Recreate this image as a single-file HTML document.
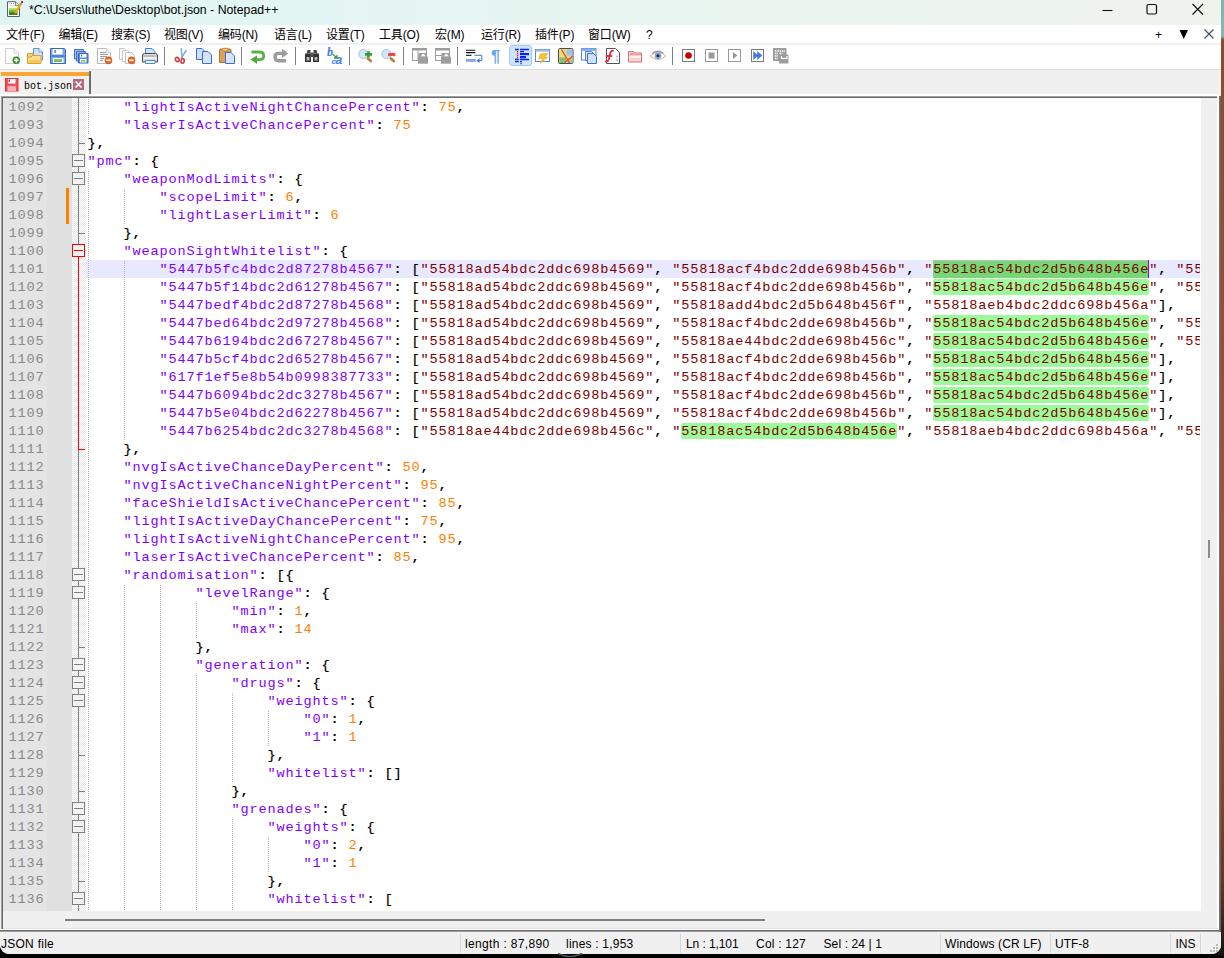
<!DOCTYPE html>
<html lang="zh"><head><meta charset="utf-8"><title>bot.json - Notepad++</title>
<style>
*{box-sizing:border-box;margin:0;padding:0}
html,body{width:1224px;height:958px;overflow:hidden}
body{position:relative;background:#000;font-family:"Liberation Sans","Noto Sans CJK SC",sans-serif;font-size:12px;color:#000}
.abs{position:absolute}
#desk{left:1218px;top:0;width:6px;height:956px;background:linear-gradient(180deg,#7fb2b4 0,#86b5b6 36px,#8e4a2c 40px,#9a4b28 300px,#a45632 560px,#8c4022 800px,#6a3520 880px,#3a241a 925px,#15100c 956px)}
#win{left:0;top:0;width:1221px;height:954px;background:#f0f0f0;border-radius:0 0 9px 9px;overflow:hidden}
#title{left:0;top:0;width:1221px;height:25px;background:linear-gradient(90deg,#e0f5f3 0,#e4f6f3 25%,#e9f5f0 55%,#edf4ee 80%,#eef3ec 100%)}
#title .t{left:29px;top:2px;height:16px;line-height:16px;font-size:12.3px;white-space:nowrap;letter-spacing:0px}
#menu{left:0;top:25px;width:1221px;height:18px;background:#fff}
#menu span{position:absolute;top:1px;letter-spacing:-.15px;height:18px;line-height:18px;font-size:12px;white-space:nowrap}
#mline{left:0;top:43px;width:1220px;height:2px;background:#f0f0f0}
#tool{left:0;top:45px;width:1221px;height:25px;background:#fff;border-bottom:1px solid #dfdfdf}
#tool .sep{position:absolute;top:2px;width:1px;height:18px;background:#808080}
#tool svg{position:absolute;top:3px;width:16px;height:16px;overflow:visible}
#tabbar{left:0;top:70px;width:1221px;height:24px;background:#f0f0f0}
#tab{left:1px;top:1px;width:90px;height:24px;background:#f0f0f0;border-right:2px solid #6d6d6d}
#tab .bar{left:0;top:1px;width:88px;height:4px;background:#faa634}
#tab .nm{left:23px;top:10px;font-family:"Liberation Mono",monospace;font-size:10px;letter-spacing:0px;line-height:12px;color:#000;white-space:nowrap}
/* editor frame */
#edtop1{left:0;top:94px;width:1219px;height:2px;background:#fff}
#edtop2{left:1px;top:96px;width:1217px;height:1px;background:#a0a0a0}
#edtop3{left:2px;top:97px;width:1216px;height:1px;background:#696969}
#edl1{left:1px;top:96px;width:1px;height:834px;background:#a0a0a0}
#edl2{left:2px;top:97px;width:1px;height:832px;background:#696969}
#edr{left:1219px;top:96px;width:2px;height:836px;background:linear-gradient(90deg,#7a7a7a,#5e5e5e)}
#edrw{left:1217px;top:96px;width:2px;height:834px;background:#fff}
#edb0{left:3px;top:928px;width:1215px;height:1px;background:#e3e3e3}
#edb1{left:0;top:929px;width:1219px;height:1px;background:#fff}
#edb2{left:0;top:930px;width:1221px;height:1px;background:#696969}
#edb3{left:0;top:931px;width:1221px;height:1px;background:#a0a0a0}
#ed{left:3px;top:98px;width:1198px;height:813px;background:#fff;overflow:hidden}
#vs{left:1201px;top:98px;width:16px;height:830px;background:#f0f0f0}
#vs i{position:absolute;left:7px;top:442px;width:2px;height:18px;background:#8b8b8b}
#hs{left:3px;top:911px;width:1198px;height:17px;background:#f0f0f0}
#hs i{position:absolute;left:62px;top:8px;width:700px;height:2px;background:#7f7f7f}
/* status */
#status{left:0;top:932px;width:1221px;height:22px;background:#f0f0f0}
#status span{position:absolute;top:3px;height:18px;line-height:18px;font-size:12px;white-space:nowrap;letter-spacing:0px}
#status b{position:absolute;top:2px;width:1px;height:19px;background:#d7d7d7}
/* editor internals */
#ed .m1{left:0;top:0;width:44px;height:813px;background:#e4e4e4}
#ed .m2{left:44px;top:0;width:25px;height:813px;background:#e0e0e0}
#ed .m3{left:69px;top:0;width:14px;height:813px;background-color:#fff;background-image:linear-gradient(45deg,#e6e6e6 25%,transparent 25%,transparent 75%,#e6e6e6 75%),linear-gradient(45deg,#e6e6e6 25%,transparent 25%,transparent 75%,#e6e6e6 75%);background-size:2px 2px;background-position:0 0,1px 1px}
.ln,.code{position:absolute;font-family:"Liberation Mono",monospace;font-size:13.6px;letter-spacing:.839px;line-height:18px;height:18px;white-space:pre;margin-top:1px}
.ln{left:5.5px;color:#8a8a8a;width:40px}
.code{left:84.5px;color:#000}
.k{color:#8000ff}.s{color:#800000}.n{color:#ff8000}.o{font-weight:bold;color:#000}.p{color:#000;-webkit-text-stroke:.2px #000}
.hl{background:#9bfb9b;border-radius:2px;padding-top:1px}
.g{position:absolute;width:1px;background-image:linear-gradient(180deg,#b4b4b4 50%,transparent 50%);background-size:1px 2px}
.fl{position:absolute;width:1px;background:#808080}
.ft{position:absolute;height:1px;width:6px;background:#808080}
.fb{position:absolute;width:13px;height:13px;border:1px solid #808080;background:#f3f3f3}
.fb i{position:absolute;left:1px;top:5px;width:9px;height:1px;background:#808080}
.red{background:#ff0000}.fb.rb{border-color:#ff0000}.fb.rb i{background:#ff0000}
</style></head>
<body>
<div id="desk" class="abs"></div>
<div id="win" class="abs">
<div id="title" class="abs"><svg class="abs" style="left:0;top:0;width:26px;height:20px" viewBox="0 0 26 20"><defs><linearGradient id="gg" x1="0" y1="0" x2="0" y2="1"><stop offset="0" stop-color="#dcf080"/><stop offset=".55" stop-color="#58b820"/><stop offset="1" stop-color="#0c5c06"/></linearGradient></defs><path d="M7.500 1.700h8l4 4v10.800h-12z" fill="#fff" stroke="#5e5e5e" stroke-width="1"/><path d="M15.500 1.700v4h4" fill="#ececec" stroke="#6a6a6a" stroke-width=".8"/><path d="M9 3.500h6" stroke="#9a9a9a" stroke-width="1" stroke-dasharray="1 1"/><path d="M9 5.800h6" stroke="#b8d0f0" stroke-width=".8"/><rect x="9" y="7.800" width="8.500" height="7" fill="url(#gg)"/><path d="M15.300 13l5.700-9.300" stroke="#f5a800" stroke-width="2.300"/><path d="M14.300 14.600l.4-2l1.500 .9z" fill="#b07a3a"/><path d="M20.800 4.100l.8-1.300" stroke="#8aa0c4" stroke-width="2.300"/><circle cx="22.100" cy="2" r="1.100" fill="#a80010"/></svg><div class="t abs">*C:\Users\luthe\Desktop\bot.json - Notepad++</div><svg class="abs" style="left:1095px;top:0;width:120px;height:20px" viewBox="0 0 120 20"><path d="M7.500 10.500h10" stroke="#111" stroke-width="1.100"/><rect x="52" y="4.500" width="9.500" height="9.500" rx="1.500" fill="none" stroke="#111" stroke-width="1.200"/><path d="M97.500 4l10.500 10.500M108 4l-10.500 10.500" stroke="#111" stroke-width="1.200"/></svg></div>
<div id="menu" class="abs"><span id="mn0" style="left:6px">文件(F)</span><span id="mn1" style="left:58.5px">编辑(E)</span><span id="mn2" style="left:111px">搜索(S)</span><span id="mn3" style="left:164px">视图(V)</span><span id="mn4" style="left:218px">编码(N)</span><span id="mn5" style="left:274px">语言(L)</span><span id="mn6" style="left:326px">设置(T)</span><span id="mn7" style="left:379px">工具(O)</span><span id="mn8" style="left:435px">宏(M)</span><span id="mn9" style="left:481px">运行(R)</span><span id="mn10" style="left:535px">插件(P)</span><span id="mn11" style="left:588px">窗口(W)</span><span id="mn12" style="left:646px">?</span><span style="left:1155px;top:1px;font-size:12px">+</span><svg class="abs" style="left:1178px;top:0;width:40px;height:18px" viewBox="0 0 40 18"><path d="M1.500 5h8.500l-4.250 9z" fill="#000"/><path d="M26.500 4.500l9 9M35.500 4.500l-9 9" stroke="#3a4a6a" stroke-width="1.100"/></svg></div>
<div id="mline" class="abs"></div>
<div id="tool" class="abs"><svg style="left:4px" viewBox="0 0 16 16"><path d="M1.500 .5h8.500l4.500 4.500v10.500h-13z" fill="#fdfdfd" stroke="#cdcdcd"/><path d="M10 .5v4.500h4.500" fill="#f3f3f3" stroke="#d6d6d6"/><circle cx="12.300" cy="12.200" r="3.500" fill="#3f9a2f" stroke="#2f7d22" stroke-width=".7"/><path d="M12.300 10v4.400M10.100 12.200h4.400" stroke="#fff" stroke-width="1.500"/></svg><svg style="left:27px" viewBox="0 0 16 16"><path d="M6.500 .5h5.500l3.500 3.500v8h-9z" fill="#cfe2fb" stroke="#5b92dc"/><path d="M12 .5v3.500h3.500" fill="#eaf3fe" stroke="#5b92dc" stroke-width=".8"/><path d="M.5 5.500h5.500v4h-5.500z" fill="#f7cf7a" stroke="#e59a30"/><path d="M.5 15.500v-6.500h3.500l1.500-1.500h8.500v8z" fill="#fbdf8c" stroke="#e59a30"/><path d="M1.500 13.500h11.500" stroke="#f7c552" stroke-width="2.500"/></svg><svg style="left:50px" viewBox="0 0 16 16"><path d="M.5 .5h14l1 1v14h-15z" fill="#7aa6ea" stroke="#3566c2"/><rect x="2.500" y="1" width="10" height="5.500" fill="#fff"/><rect x="4.500" y="2" width="1.200" height="3" fill="#2f62bd"/><rect x="1.500" y="7" width="13" height="2" fill="#4f84d8"/><rect x="3" y="10" width="10.500" height="5" fill="#fff"/><rect x="4" y="11.200" width="8" height="2.800" fill="#74c24a"/></svg><svg style="left:73px" viewBox="0 0 16 16"><path d="M1.500 1.500h9v9.500h-9z" fill="#a9c3ee" stroke="#3d6fc4"/><path d="M3.500 3.500h9v9.500h-9z" fill="#98b8ec" stroke="#3d6fc4"/><path d="M5.500 5.500h9.500v9.500h-9.500z" fill="#5b8fe0" stroke="#2f62bd"/><rect x="7" y="6" width="6.500" height="3.500" fill="#fff"/><rect x="8" y="6.500" width="1" height="2" fill="#2f62bd"/><rect x="7" y="11" width="6.500" height="3.500" fill="#fff"/><rect x="8" y="12" width="4.500" height="1.600" fill="#7ec850"/></svg><svg style="left:96px" viewBox="0 0 16 16"><path d="M1.500 .5h9l4 4v11h-13z" fill="#fff" stroke="#b9b9b9"/><path d="M10.500 .5v4h4" fill="#f2f2f2" stroke="#c4c4c4" stroke-width=".8"/><path d="M4 4.500h6M4 6.500h8M4 8.500h7M4 10.500h4M4 12.500h3" stroke="#8f8f8f" stroke-width=".9"/><circle cx="12.500" cy="12.300" r="3.500" fill="#e9641b" stroke="#c8500f" stroke-width=".6"/><path d="M10.300 12.300h4.400" stroke="#fff" stroke-width="1.700"/></svg><svg style="left:119px" viewBox="0 0 16 16"><path d="M.5 .5h5l2.500 2.500v8.500h-7.500z" fill="#fff" stroke="#c6c6c6"/><path d="M3.500 2.500h5l2.500 2.500v8.500h-7.500z" fill="#fff" stroke="#c6c6c6"/><path d="M6.500 4.500h6l3 3v8h-9z" fill="#fff" stroke="#c0c0c0"/><circle cx="12.500" cy="12.300" r="3.500" fill="#e9641b" stroke="#c8500f" stroke-width=".6"/><path d="M10.300 12.300h4.400" stroke="#fff" stroke-width="1.700"/></svg><svg style="left:142px" viewBox="0 0 16 16"><path d="M3.500 .5h6.500l3 3v4h-9.500z" fill="#cfe2fb" stroke="#4f86d6"/><path d="M.5 8q0-2.500 2-2.500h11q2 0 2 2.500v6h-15z" fill="#dedede" stroke="#4a4a4a"/><path d="M1.500 8h13" stroke="#b4b4b4" stroke-width="1.600"/><path d="M1.500 10h13" stroke="#f6f6f6" stroke-width="1.600"/><path d="M3.500 12.500h9.500v3h-9.500z" fill="#eef5fe" stroke="#4f86d6"/></svg><div class="sep" style="left:164px"></div><svg style="left:173px" viewBox="0 0 16 16"><path d="M8.200 0l.9 10.500" stroke="#7fb0e4" stroke-width="1.500" fill="none"/><path d="M13.300 2.200l-5.500 8.800" stroke="#6f9fd8" stroke-width="1.400" fill="none"/><ellipse cx="4.300" cy="11.500" rx="1.800" ry="2.100" fill="none" stroke="#d23a34" stroke-width="1.600" transform="rotate(-25 4.300 11.500)"/><ellipse cx="9.600" cy="13" rx="1.600" ry="2.200" fill="none" stroke="#d23a34" stroke-width="1.600" transform="rotate(10 9.600 13)"/></svg><svg style="left:196px" viewBox="0 0 16 16"><path d="M.5 .5h5.500l3.500 3.500v7.500h-9z" fill="#cfe0fa" stroke="#3a6fd0"/><path d="M6.500 3.500h5.500l3.500 3.500v8.500h-9z" fill="#d6e5fb" stroke="#3a6fd0"/></svg><svg style="left:219px" viewBox="0 0 16 16"><path d="M.5 2q0-1 1-1h9.500q1 0 1 1v12.500h-11.500z" fill="#d9a15a" stroke="#b0742a"/><rect x="3.500" y=".3" width="5.500" height="2.700" rx="1" fill="#f3cd8c" stroke="#b0742a" stroke-width=".8"/><path d="M6.500 4.500h5.500l3.500 3.500v7.500h-9z" fill="#d6e5fb" stroke="#3a6fd0"/></svg><div class="sep" style="left:241px"></div><svg style="left:250px" viewBox="0 0 16 16"><path d="M1.500 4h8q4.200 0 4.200 3.800t-4.200 3.800h-4" fill="none" stroke="#58b246" stroke-width="2.800"/><path d="M7 7.500l-6.500 4l6.500 4.500z" fill="#4ea83c"/></svg><svg style="left:273px" viewBox="0 0 16 16"><path d="M13 12.800h-7.500q-3.500 0-3.500-3.700t3.500-3.700h4" fill="none" stroke="#9b9b9b" stroke-width="3.400"/><path d="M9 .8l6.300 4.600l-6.300 4.600z" fill="#9b9b9b"/></svg><div class="sep" style="left:295px"></div><svg style="left:304px" viewBox="0 0 16 16"><path d="M2.500 5.500l1-3.500h3v3.500zM9.500 5.500v-3.500h3l1 3.500z" fill="#4a4a4a"/><rect x="1" y="5.500" width="6" height="8.500" fill="#333"/><rect x="9" y="5.500" width="6" height="8.500" fill="#333"/><rect x="6.500" y="4.500" width="3" height="4.500" fill="#555"/><rect x="2.500" y="9" width="3" height="3.500" fill="#b5b5b5"/><rect x="10.500" y="9" width="3" height="3.500" fill="#b5b5b5"/></svg><svg style="left:327px" viewBox="0 0 16 16"><text x="0" y="8" font-family="Liberation Serif,serif" font-style="italic" font-weight="bold" font-size="12" fill="#3b78dc">b</text><text x="8.500" y="15.500" font-family="Liberation Sans,sans-serif" font-style="italic" font-weight="bold" font-size="12" fill="#3b82e4">a</text><path d="M5.500 6l4 3.500M10 7v3h-3" stroke="#3f9a4a" stroke-width="1.300" fill="none"/><text x="4.500" y="15.800" font-family="Liberation Sans,sans-serif" font-style="italic" font-weight="bold" font-size="8" fill="#3b82e4">c</text></svg><div class="sep" style="left:349px"></div><svg style="left:358px" viewBox="0 0 16 16"><circle cx="5.300" cy="6" r="4.500" fill="#d4e6fb" stroke="#a4c4ea" stroke-width="1"/><path d="M9.800 10.500l3 2.600" stroke="#b57c3a" stroke-width="2.600" stroke-linecap="round"/><path d="M10.500 3.200v6.400M7 6.400h7" stroke="#3c9a3a" stroke-width="2.600"/></svg><svg style="left:381px" viewBox="0 0 16 16"><circle cx="5.300" cy="6" r="4.500" fill="#d4e6fb" stroke="#a4c4ea" stroke-width="1"/><path d="M9.800 10.500l3 2.600" stroke="#b57c3a" stroke-width="2.600" stroke-linecap="round"/><rect x="7" y="5" width="7.200" height="3" rx=".6" fill="#e83a3a" stroke="#f59a9a" stroke-width=".5"/></svg><div class="sep" style="left:403px"></div><svg style="left:412px" viewBox="0 0 16 16"><rect x=".5" y=".5" width="14" height="12" fill="#fff" stroke="#9d9d9d"/><rect x="0" y="0" width="15" height="2.500" fill="#9d9d9d"/><path d="M6 2v11" stroke="#9d9d9d"/><rect x="6.500" y="5" width="8" height="8" fill="#9d9d9d"/><path d="M8.500 8.500l2-2.500h1.500l2 2.500z" fill="#fff"/><rect x="6" y="8.700" width="10" height="7" fill="#9d9d9d"/></svg><svg style="left:435px" viewBox="0 0 16 16"><rect x=".5" y=".5" width="14" height="12" fill="#fff" stroke="#9d9d9d"/><rect x="0" y="0" width="15" height="2.500" fill="#9d9d9d"/><path d="M0 7.500h15" stroke="#9d9d9d"/><rect x="6.500" y="5" width="8" height="8" fill="#9d9d9d"/><path d="M8.500 8.500l2-2.500h1.500l2 2.500z" fill="#fff"/><rect x="6" y="8.700" width="10" height="7" fill="#9d9d9d"/></svg><div class="sep" style="left:457px"></div><svg style="left:466px" viewBox="0 0 16 16"><path d="M0 2.300h9.300M0 4.600h9.300" stroke="#111" stroke-width="1.100"/><path d="M0 7.300h5.500" stroke="#111" stroke-width="1.100"/><path d="M8.500 7.300h7.300v5.400h-3.500" fill="none" stroke="#3b6fd0" stroke-width="1"/><path d="M13.500 10.300l-3 2.400l3 2.400z" fill="#3b6fd0"/><rect x="0" y="11" width="9.800" height="2.800" fill="#7da7e8"/></svg><svg style="left:489px" viewBox="0 0 16 16"><text x="2" y="13.500" font-family="Liberation Sans,sans-serif" font-weight="bold" font-size="16.500" fill="#6aa5f0">¶</text></svg><div class="abs" style="left:509px;top:0;width:23px;height:21px;background:#cce4fc;border:1px solid #9ccbfa;border-radius:3px"></div><svg style="left:512px" viewBox="0 0 16 16"><g transform="translate(1 0)"><path d="M2 1.500h3.800M7 1.500h9M7 3.700h4M2 11.500h3.800M7 11.500h9M2 13.700h3.800M7 13.700h2" stroke="#0a22e8" stroke-width="1.300"/><rect x="7" y="5" width="9" height="2.200" fill="#0a22e8"/><rect x="7" y="8" width="6" height="2.200" fill="#0a22e8"/><g fill="#f01414"><rect x="3.800" y="3" width="1.400" height="1.300"/><rect x="3.800" y="5" width="1.400" height="1.300"/><rect x="3.800" y="7" width="1.400" height="1.300"/><rect x="3.800" y="9" width="1.400" height="1.300"/></g><rect x="7.500" y="15" width="1.200" height="1.200" fill="#0a22e8"/></g></svg><svg style="left:535px" viewBox="0 0 16 16"><rect x=".5" y="1.500" width="14" height="12" fill="#fff" stroke="#5f86cc"/><rect x=".5" y="1.500" width="14" height="2.200" fill="#9fbcee"/><path d="M5.500 5.500h8l-3.500 3.500h3l-8 6.500l2.500-5h-4z" fill="#f1c232" stroke="#e0ad1c" stroke-width=".5"/></svg><svg style="left:558px" viewBox="0 0 16 16"><rect x=".5" y=".5" width="14.500" height="15" rx="1.200" fill="#e9dd74" stroke="#4a4a5e"/><rect x="8.500" y="1.500" width="6" height="6" fill="#9cc3ee"/><rect x="1.500" y="9.500" width="6.500" height="5.500" fill="#86c06a"/><rect x="9.500" y="10" width="5" height="5" fill="#a6d38a"/><path d="M3.500 1.500l8 13.500M14 8.500l-7 6" stroke="#e8463c" stroke-width="1.300" fill="none"/></svg><svg style="left:581px" viewBox="0 0 16 16"><rect x=".5" y=".5" width="14.500" height="11.500" fill="#fff" stroke="#4f86d6"/><rect x=".5" y=".5" width="14.500" height="2.500" fill="#8fb0ea"/><path d="M4.500 3v9" stroke="#4f86d6"/><path d="M4.500 3.500h6l2.500 2.500v6.500h-8.500z" fill="#dbe8fb" stroke="#4f86d6"/><path d="M6.500 5.500h6l3 3v7h-9z" fill="#cfe0fa" stroke="#3a6fd0"/></svg><svg style="left:604px" viewBox="0 0 16 16"><path d="M2.500 .5h9l4 4v11h-13z" fill="#fff" stroke="#555"/><path d="M13 7.500v6" stroke="#8a8a8a" stroke-dasharray="2 1.600"/><path d="M9 2.800q-2-.4-2.600 2l-1.800 7q-.6 2-3 1.600M2.500 8h5" fill="none" stroke="#e8323c" stroke-width="1.800" stroke-linecap="round"/></svg><svg style="left:627px" viewBox="0 0 16 16"><path d="M1.500 3.500h5l1 1.500h7v9h-13z" fill="#f8d4d4" stroke="#dc7070"/><path d="M1.500 7h13" stroke="#dc7070"/><path d="M3 5.500h4.500" stroke="#e89a9a"/><rect x="2" y="7.500" width="12" height="2.500" fill="#fdf0f0"/></svg><svg style="left:650px" viewBox="0 0 16 16"><path d="M.3 8q7.700-8 15.400 0q-7.700 7-15.400 0z" fill="#fff" stroke="#dcae78" stroke-width="1"/><path d="M2.500 5.500q5.500-4.500 11 0" fill="none" stroke="#9a9aa2" stroke-width="1.400"/><circle cx="8" cy="7.800" r="3.300" fill="#7ea6e0"/><circle cx="8" cy="7.800" r="1.500" fill="#1c2c4a"/></svg><div class="sep" style="left:672px"></div><svg style="left:682px" viewBox="0 0 16 16"><rect x=".5" y="1.500" width="12" height="12" fill="#fff" stroke="#7a7a7a"/><circle cx="6.500" cy="7.500" r="3.300" fill="#c80000"/></svg><svg style="left:705px" viewBox="0 0 16 16"><rect x=".5" y="1.500" width="12" height="12" fill="#fff" stroke="#9a9a9a"/><rect x="3.500" y="4.500" width="6" height="6" fill="#9a9a9a"/></svg><svg style="left:728px" viewBox="0 0 16 16"><rect x=".5" y="1.500" width="12" height="12" fill="#fff" stroke="#9a9a9a"/><path d="M5 4l4.500 3.500l-4.500 3.500z" fill="#9a9a9a"/></svg><svg style="left:751px" viewBox="0 0 16 16"><rect x=".5" y="1.500" width="12" height="12" fill="#fff" stroke="#7a7a7a"/><path d="M2.500 3.500l4.500 4l-4.500 4zM6.500 3.500l4.500 4l-4.500 4z" fill="#3b7be0" stroke="#2a5fc0" stroke-width=".4"/></svg><svg style="left:773px" viewBox="0 0 16 16"><rect x="0" y="0" width="13.500" height="13" fill="#9d9d9d"/><path d="M2 3h10M2 5.500h3M2 8h3M2 10.500h3M6.500 5.500h3M6.500 8h2" stroke="#fff" stroke-width="1.300" stroke-dasharray="1.500 .8"/><rect x="6" y="6.500" width="9.500" height="9" fill="#9d9d9d"/><path d="M8.500 8v2.500h5.500v-2.500" fill="none" stroke="#fff" stroke-width="1.200"/></svg></div>
<div id="tabbar" class="abs"><div id="tab" class="abs"><div class="bar abs"></div><svg class="abs" style="left:4px;top:7px;width:14px;height:14px" viewBox="0 0 14 14"><rect x=".5" y=".5" width="12.500" height="12.500" fill="#f0505a" stroke="#e0303c"/><rect x="3" y="1" width="7.500" height="4.500" fill="#fff"/><rect x="3.500" y="1.500" width="1.500" height="2.500" fill="#e0303c"/><rect x="2.500" y="8" width="8.500" height="5" fill="#f7b0b4"/></svg><div class="nm abs">bot.json</div><svg class="abs" style="left:72px;top:8px;width:12px;height:12px" viewBox="0 0 12 12"><rect x="0" y="0" width="11" height="11" fill="#b5687c"/><path d="M2.500 2.500l6 6M8.500 2.500l-6 6" stroke="#fff" stroke-width="1.700"/></svg></div></div>
<div id="edtop1" class="abs"></div><div id="edtop2" class="abs"></div><div id="edtop3" class="abs"></div><div id="edl1" class="abs"></div><div id="edl2" class="abs"></div><div id="edrw" class="abs"></div><div id="edb0" class="abs"></div><div id="edb1" class="abs"></div><div id="edb2" class="abs"></div><div id="edb3" class="abs"></div>
<div id="ed" class="abs"><div class="m1 abs"></div><div class="m2 abs"></div><div class="m3 abs"></div>
<div class="abs" style="left:83px;top:162px;width:1114px;height:18px;background:#e8e8ff"></div>
<div class="abs" style="left:930px;top:162px;width:215px;height:18px;background:#75d875;border-top:1px solid #b9c0b9"></div>
<div class="abs" style="left:1145px;top:162px;width:1px;height:18px;background:#7a10f0"></div>
<div class="abs" style="left:63px;top:90px;width:3px;height:36px;background:#ff8000"></div>
<div class="g" style="left:85px;top:1px;height:35px"></div>
<div class="g" style="left:85px;top:73px;height:740px"></div>
<div class="g" style="left:121px;top:91px;height:35px"></div>
<div class="g" style="left:121px;top:163px;height:179px"></div>
<div class="g" style="left:121px;top:487px;height:326px"></div>
<div class="g" style="left:157px;top:487px;height:326px"></div>
<div class="g" style="left:193px;top:505px;height:35px"></div>
<div class="g" style="left:193px;top:577px;height:236px"></div>
<div class="g" style="left:229px;top:595px;height:89px"></div>
<div class="g" style="left:229px;top:721px;height:92px"></div>
<div class="g" style="left:265px;top:613px;height:35px"></div>
<div class="g" style="left:265px;top:739px;height:35px"></div>
<div class="fl" style="left:75px;top:0px;height:18px"></div>
<div class="fl" style="left:75px;top:18px;height:18px"></div>
<div class="fl" style="left:75px;top:36px;height:18px"></div><div class="ft" style="left:76px;top:45px"></div>
<div class="fl" style="left:75px;top:54px;height:2px"></div>
<div class="fl" style="left:75px;top:69px;height:3px"></div>
<div class="fb" style="left:69px;top:56px"><i></i></div>
<div class="fl" style="left:75px;top:72px;height:2px"></div>
<div class="fl" style="left:75px;top:87px;height:3px"></div>
<div class="fb" style="left:69px;top:74px"><i></i></div>
<div class="fl" style="left:75px;top:90px;height:18px"></div>
<div class="fl" style="left:75px;top:108px;height:18px"></div>
<div class="fl" style="left:75px;top:126px;height:18px"></div><div class="ft" style="left:76px;top:135px"></div>
<div class="fl" style="left:75px;top:144px;height:2px"></div>
<div class="fl red" style="left:75px;top:159px;height:3px"></div>
<div class="fb rb" style="left:69px;top:146px"><i></i></div>
<div class="fl red" style="left:75px;top:162px;height:18px"></div>
<div class="fl red" style="left:75px;top:180px;height:18px"></div>
<div class="fl red" style="left:75px;top:198px;height:18px"></div>
<div class="fl red" style="left:75px;top:216px;height:18px"></div>
<div class="fl red" style="left:75px;top:234px;height:18px"></div>
<div class="fl red" style="left:75px;top:252px;height:18px"></div>
<div class="fl red" style="left:75px;top:270px;height:18px"></div>
<div class="fl red" style="left:75px;top:288px;height:18px"></div>
<div class="fl red" style="left:75px;top:306px;height:18px"></div>
<div class="fl red" style="left:75px;top:324px;height:18px"></div>
<div class="fl red" style="left:75px;top:342px;height:10px"></div><div class="ft red" style="left:76px;top:351px"></div><div class="fl" style="left:75px;top:352px;height:8px"></div>
<div class="fl" style="left:75px;top:360px;height:18px"></div>
<div class="fl" style="left:75px;top:378px;height:18px"></div>
<div class="fl" style="left:75px;top:396px;height:18px"></div>
<div class="fl" style="left:75px;top:414px;height:18px"></div>
<div class="fl" style="left:75px;top:432px;height:18px"></div>
<div class="fl" style="left:75px;top:450px;height:18px"></div>
<div class="fl" style="left:75px;top:468px;height:2px"></div>
<div class="fl" style="left:75px;top:483px;height:3px"></div>
<div class="fb" style="left:69px;top:470px"><i></i></div>
<div class="fl" style="left:75px;top:486px;height:2px"></div>
<div class="fl" style="left:75px;top:501px;height:3px"></div>
<div class="fb" style="left:69px;top:488px"><i></i></div>
<div class="fl" style="left:75px;top:504px;height:18px"></div>
<div class="fl" style="left:75px;top:522px;height:18px"></div>
<div class="fl" style="left:75px;top:540px;height:18px"></div><div class="ft" style="left:76px;top:549px"></div>
<div class="fl" style="left:75px;top:558px;height:2px"></div>
<div class="fl" style="left:75px;top:573px;height:3px"></div>
<div class="fb" style="left:69px;top:560px"><i></i></div>
<div class="fl" style="left:75px;top:576px;height:2px"></div>
<div class="fl" style="left:75px;top:591px;height:3px"></div>
<div class="fb" style="left:69px;top:578px"><i></i></div>
<div class="fl" style="left:75px;top:594px;height:2px"></div>
<div class="fl" style="left:75px;top:609px;height:3px"></div>
<div class="fb" style="left:69px;top:596px"><i></i></div>
<div class="fl" style="left:75px;top:612px;height:18px"></div>
<div class="fl" style="left:75px;top:630px;height:18px"></div>
<div class="fl" style="left:75px;top:648px;height:18px"></div><div class="ft" style="left:76px;top:657px"></div>
<div class="fl" style="left:75px;top:666px;height:18px"></div>
<div class="fl" style="left:75px;top:684px;height:18px"></div><div class="ft" style="left:76px;top:693px"></div>
<div class="fl" style="left:75px;top:702px;height:2px"></div>
<div class="fl" style="left:75px;top:717px;height:3px"></div>
<div class="fb" style="left:69px;top:704px"><i></i></div>
<div class="fl" style="left:75px;top:720px;height:2px"></div>
<div class="fl" style="left:75px;top:735px;height:3px"></div>
<div class="fb" style="left:69px;top:722px"><i></i></div>
<div class="fl" style="left:75px;top:738px;height:18px"></div>
<div class="fl" style="left:75px;top:756px;height:18px"></div>
<div class="fl" style="left:75px;top:774px;height:18px"></div><div class="ft" style="left:76px;top:783px"></div>
<div class="fl" style="left:75px;top:792px;height:2px"></div>
<div class="fl" style="left:75px;top:807px;height:3px"></div>
<div class="fb" style="left:69px;top:794px"><i></i></div>
<div class="fl" style="left:75px;top:810px;height:3px"></div>
<div class="ln" style="top:0px">1092</div>
<div class="code" style="top:0px">    <span class="k">"lightIsActiveNightChancePercent"</span><span class="o">:</span> <span class="n">75</span><span class="o">,</span></div>
<div class="ln" style="top:18px">1093</div>
<div class="code" style="top:18px">    <span class="k">"laserIsActiveChancePercent"</span><span class="o">:</span> <span class="n">75</span></div>
<div class="ln" style="top:36px">1094</div>
<div class="code" style="top:36px"><span class="p">}</span><span class="o">,</span></div>
<div class="ln" style="top:54px">1095</div>
<div class="code" style="top:54px"><span class="k">"pmc"</span><span class="o">:</span> <span class="p">{</span></div>
<div class="ln" style="top:72px">1096</div>
<div class="code" style="top:72px">    <span class="k">"weaponModLimits"</span><span class="o">:</span> <span class="p">{</span></div>
<div class="ln" style="top:90px">1097</div>
<div class="code" style="top:90px">        <span class="k">"scopeLimit"</span><span class="o">:</span> <span class="n">6</span><span class="o">,</span></div>
<div class="ln" style="top:108px">1098</div>
<div class="code" style="top:108px">        <span class="k">"lightLaserLimit"</span><span class="o">:</span> <span class="n">6</span></div>
<div class="ln" style="top:126px">1099</div>
<div class="code" style="top:126px">    <span class="p">}</span><span class="o">,</span></div>
<div class="ln" style="top:144px">1100</div>
<div class="code" style="top:144px">    <span class="k">"weaponSightWhitelist"</span><span class="o">:</span> <span class="p">{</span></div>
<div class="ln" style="top:162px">1101</div>
<div class="code" style="top:162px">        <span class="k">"5447b5fc4bdc2d87278b4567"</span><span class="o">:</span> <span class="p">[</span><span class="s">"55818ad54bdc2ddc698b4569"</span><span class="o">,</span> <span class="s">"55818acf4bdc2dde698b456b"</span><span class="o">,</span> <span class="s">"55818ac54bdc2d5b648b456e"</span><span class="o">,</span> <span class="s">"55818aeb4bdc2ddc698b456a"</span><span class="p">]</span></div>
<div class="ln" style="top:180px">1102</div>
<div class="code" style="top:180px">        <span class="k">"5447b5f14bdc2d61278b4567"</span><span class="o">:</span> <span class="p">[</span><span class="s">"55818ad54bdc2ddc698b4569"</span><span class="o">,</span> <span class="s">"55818acf4bdc2dde698b456b"</span><span class="o">,</span> <span class="s">"<span class="hl">55818ac54bdc2d5b648b456e</span>"</span><span class="o">,</span> <span class="s">"55818aeb4bdc2ddc698b456a"</span><span class="p">]</span></div>
<div class="ln" style="top:198px">1103</div>
<div class="code" style="top:198px">        <span class="k">"5447bedf4bdc2d87278b4568"</span><span class="o">:</span> <span class="p">[</span><span class="s">"55818ad54bdc2ddc698b4569"</span><span class="o">,</span> <span class="s">"55818add4bdc2d5b648b456f"</span><span class="o">,</span> <span class="s">"55818aeb4bdc2ddc698b456a"</span><span class="p">]</span><span class="o">,</span></div>
<div class="ln" style="top:216px">1104</div>
<div class="code" style="top:216px">        <span class="k">"5447bed64bdc2d97278b4568"</span><span class="o">:</span> <span class="p">[</span><span class="s">"55818ad54bdc2ddc698b4569"</span><span class="o">,</span> <span class="s">"55818acf4bdc2dde698b456b"</span><span class="o">,</span> <span class="s">"<span class="hl">55818ac54bdc2d5b648b456e</span>"</span><span class="o">,</span> <span class="s">"55818aeb4bdc2ddc698b456a"</span><span class="p">]</span></div>
<div class="ln" style="top:234px">1105</div>
<div class="code" style="top:234px">        <span class="k">"5447b6194bdc2d67278b4567"</span><span class="o">:</span> <span class="p">[</span><span class="s">"55818ad54bdc2ddc698b4569"</span><span class="o">,</span> <span class="s">"55818ae44bdc2dde698b456c"</span><span class="o">,</span> <span class="s">"<span class="hl">55818ac54bdc2d5b648b456e</span>"</span><span class="o">,</span> <span class="s">"55818aeb4bdc2ddc698b456a"</span><span class="p">]</span></div>
<div class="ln" style="top:252px">1106</div>
<div class="code" style="top:252px">        <span class="k">"5447b5cf4bdc2d65278b4567"</span><span class="o">:</span> <span class="p">[</span><span class="s">"55818ad54bdc2ddc698b4569"</span><span class="o">,</span> <span class="s">"55818acf4bdc2dde698b456b"</span><span class="o">,</span> <span class="s">"<span class="hl">55818ac54bdc2d5b648b456e</span>"</span><span class="p">]</span><span class="o">,</span></div>
<div class="ln" style="top:270px">1107</div>
<div class="code" style="top:270px">        <span class="k">"617f1ef5e8b54b0998387733"</span><span class="o">:</span> <span class="p">[</span><span class="s">"55818ad54bdc2ddc698b4569"</span><span class="o">,</span> <span class="s">"55818acf4bdc2dde698b456b"</span><span class="o">,</span> <span class="s">"<span class="hl">55818ac54bdc2d5b648b456e</span>"</span><span class="p">]</span><span class="o">,</span></div>
<div class="ln" style="top:288px">1108</div>
<div class="code" style="top:288px">        <span class="k">"5447b6094bdc2dc3278b4567"</span><span class="o">:</span> <span class="p">[</span><span class="s">"55818ad54bdc2ddc698b4569"</span><span class="o">,</span> <span class="s">"55818acf4bdc2dde698b456b"</span><span class="o">,</span> <span class="s">"<span class="hl">55818ac54bdc2d5b648b456e</span>"</span><span class="p">]</span><span class="o">,</span></div>
<div class="ln" style="top:306px">1109</div>
<div class="code" style="top:306px">        <span class="k">"5447b5e04bdc2d62278b4567"</span><span class="o">:</span> <span class="p">[</span><span class="s">"55818ad54bdc2ddc698b4569"</span><span class="o">,</span> <span class="s">"55818acf4bdc2dde698b456b"</span><span class="o">,</span> <span class="s">"<span class="hl">55818ac54bdc2d5b648b456e</span>"</span><span class="p">]</span><span class="o">,</span></div>
<div class="ln" style="top:324px">1110</div>
<div class="code" style="top:324px">        <span class="k">"5447b6254bdc2dc3278b4568"</span><span class="o">:</span> <span class="p">[</span><span class="s">"55818ae44bdc2dde698b456c"</span><span class="o">,</span> <span class="s">"<span class="hl">55818ac54bdc2d5b648b456e</span>"</span><span class="o">,</span> <span class="s">"55818aeb4bdc2ddc698b456a"</span><span class="o">,</span> <span class="s">"55818aeb4bdc2ddc698b456a"</span><span class="p">]</span></div>
<div class="ln" style="top:342px">1111</div>
<div class="code" style="top:342px">    <span class="p">}</span><span class="o">,</span></div>
<div class="ln" style="top:360px">1112</div>
<div class="code" style="top:360px">    <span class="k">"nvgIsActiveChanceDayPercent"</span><span class="o">:</span> <span class="n">50</span><span class="o">,</span></div>
<div class="ln" style="top:378px">1113</div>
<div class="code" style="top:378px">    <span class="k">"nvgIsActiveChanceNightPercent"</span><span class="o">:</span> <span class="n">95</span><span class="o">,</span></div>
<div class="ln" style="top:396px">1114</div>
<div class="code" style="top:396px">    <span class="k">"faceShieldIsActiveChancePercent"</span><span class="o">:</span> <span class="n">85</span><span class="o">,</span></div>
<div class="ln" style="top:414px">1115</div>
<div class="code" style="top:414px">    <span class="k">"lightIsActiveDayChancePercent"</span><span class="o">:</span> <span class="n">75</span><span class="o">,</span></div>
<div class="ln" style="top:432px">1116</div>
<div class="code" style="top:432px">    <span class="k">"lightIsActiveNightChancePercent"</span><span class="o">:</span> <span class="n">95</span><span class="o">,</span></div>
<div class="ln" style="top:450px">1117</div>
<div class="code" style="top:450px">    <span class="k">"laserIsActiveChancePercent"</span><span class="o">:</span> <span class="n">85</span><span class="o">,</span></div>
<div class="ln" style="top:468px">1118</div>
<div class="code" style="top:468px">    <span class="k">"randomisation"</span><span class="o">:</span> <span class="p">[</span><span class="p">{</span></div>
<div class="ln" style="top:486px">1119</div>
<div class="code" style="top:486px">            <span class="k">"levelRange"</span><span class="o">:</span> <span class="p">{</span></div>
<div class="ln" style="top:504px">1120</div>
<div class="code" style="top:504px">                <span class="k">"min"</span><span class="o">:</span> <span class="n">1</span><span class="o">,</span></div>
<div class="ln" style="top:522px">1121</div>
<div class="code" style="top:522px">                <span class="k">"max"</span><span class="o">:</span> <span class="n">14</span></div>
<div class="ln" style="top:540px">1122</div>
<div class="code" style="top:540px">            <span class="p">}</span><span class="o">,</span></div>
<div class="ln" style="top:558px">1123</div>
<div class="code" style="top:558px">            <span class="k">"generation"</span><span class="o">:</span> <span class="p">{</span></div>
<div class="ln" style="top:576px">1124</div>
<div class="code" style="top:576px">                <span class="k">"drugs"</span><span class="o">:</span> <span class="p">{</span></div>
<div class="ln" style="top:594px">1125</div>
<div class="code" style="top:594px">                    <span class="k">"weights"</span><span class="o">:</span> <span class="p">{</span></div>
<div class="ln" style="top:612px">1126</div>
<div class="code" style="top:612px">                        <span class="k">"0"</span><span class="o">:</span> <span class="n">1</span><span class="o">,</span></div>
<div class="ln" style="top:630px">1127</div>
<div class="code" style="top:630px">                        <span class="k">"1"</span><span class="o">:</span> <span class="n">1</span></div>
<div class="ln" style="top:648px">1128</div>
<div class="code" style="top:648px">                    <span class="p">}</span><span class="o">,</span></div>
<div class="ln" style="top:666px">1129</div>
<div class="code" style="top:666px">                    <span class="k">"whitelist"</span><span class="o">:</span> <span class="p">[</span><span class="p">]</span></div>
<div class="ln" style="top:684px">1130</div>
<div class="code" style="top:684px">                <span class="p">}</span><span class="o">,</span></div>
<div class="ln" style="top:702px">1131</div>
<div class="code" style="top:702px">                <span class="k">"grenades"</span><span class="o">:</span> <span class="p">{</span></div>
<div class="ln" style="top:720px">1132</div>
<div class="code" style="top:720px">                    <span class="k">"weights"</span><span class="o">:</span> <span class="p">{</span></div>
<div class="ln" style="top:738px">1133</div>
<div class="code" style="top:738px">                        <span class="k">"0"</span><span class="o">:</span> <span class="n">2</span><span class="o">,</span></div>
<div class="ln" style="top:756px">1134</div>
<div class="code" style="top:756px">                        <span class="k">"1"</span><span class="o">:</span> <span class="n">1</span></div>
<div class="ln" style="top:774px">1135</div>
<div class="code" style="top:774px">                    <span class="p">}</span><span class="o">,</span></div>
<div class="ln" style="top:792px">1136</div>
<div class="code" style="top:792px">                    <span class="k">"whitelist"</span><span class="o">:</span> <span class="p">[</span></div>
<div class="abs" style="left:1197px;top:0;width:1px;height:813px;background:#fff"></div></div>
<div id="vs" class="abs"><i></i></div><div id="hs" class="abs"><i></i></div>
<div id="status" class="abs"><span id="st0" style="left:1px;letter-spacing:0.26px">JSON file</span><span id="st1" style="left:465px;letter-spacing:0.34px">length : 87,890</span><span id="st2" style="left:566px;letter-spacing:0.21px">lines : 1,953</span><span id="st3" style="left:686px;letter-spacing:-0.09px">Ln : 1,101</span><span id="st4" style="left:756px;letter-spacing:0.22px">Col : 127</span><span id="st5" style="left:823.5px;letter-spacing:0.12px">Sel : 24 | 1</span><span id="st6" style="left:945px;letter-spacing:0.13px">Windows (CR LF)</span><span id="st7" style="left:1055px;letter-spacing:0px">UTF-8</span><span id="st8" style="left:1175.5px;letter-spacing:0px">INS</span><b style="left:460px"></b><b style="left:680px"></b><b style="left:940px"></b><b style="left:1050px"></b><b style="left:1170px"></b><b style="left:1200px"></b><svg class="abs" style="left:1209px;top:11px;width:11px;height:11px" viewBox="0 0 11 11"><g fill="#b8b8b8"><rect x="7" y="1" width="2" height="2"/><rect x="4" y="4" width="2" height="2"/><rect x="7" y="4" width="2" height="2"/><rect x="1" y="7" width="2" height="2"/><rect x="4" y="7" width="2" height="2"/><rect x="7" y="7" width="2" height="2"/></g></svg></div>
<div id="edr" class="abs"></div>
</div>
<svg class="abs" style="left:556px;top:953px;width:28px;height:5px" viewBox="0 0 28 5"><path d="M2 0.500q12 6 24 0" fill="none" stroke="#48525c" stroke-width="1.600"/></svg>
</body></html>
